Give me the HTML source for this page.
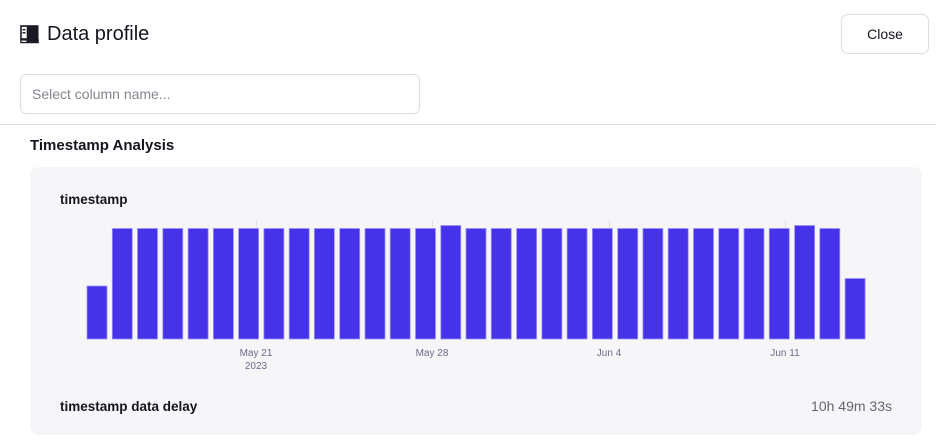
<!DOCTYPE html>
<html><head><meta charset="utf-8"><style>
body{margin:0;width:936px;height:447px;background:#fff;font-family:"Liberation Sans",sans-serif;position:relative;overflow:hidden;color:#15151f}
.abs{position:absolute}
</style></head><body>
<svg class="abs" style="left:20px;top:25px" width="19" height="19" viewBox="0 0 19 19"><rect x="1" y="1" width="6.5" height="13" fill="none" stroke="#1a1a24" stroke-width="1.6"/><rect x="8" y="0.2" width="10.5" height="14.5" fill="#1a1a24"/><rect x="0.2" y="14" width="18.6" height="4.3" rx="0.6" fill="#1a1a24"/><rect x="2.5" y="4" width="3" height="1.4" fill="#1a1a24"/><rect x="2.5" y="7" width="3" height="1.4" fill="#1a1a24"/><rect x="1.5" y="15.6" width="5" height="1.3" fill="#fff"/></svg>
<div class="abs" style="left:47px;top:23px;font-size:20px">Data profile</div>
<div class="abs" style="left:841px;top:14px;width:86px;height:38px;border:1px solid #dcdce4;border-radius:7px;font-size:14px;line-height:38px;text-align:center">Close</div>
<div class="abs" style="left:20px;top:74px;width:398px;height:38px;border:1px solid #dcdce6;border-radius:6px;font-size:14px;line-height:38px;color:#85858f"><span style="padding-left:11px">Select column name...</span></div>
<div class="abs" style="left:0;top:124px;width:936px;height:1px;background:#dedee6"></div>
<div class="abs" style="left:30px;top:137px;font-size:15px;font-weight:bold">Timestamp Analysis</div>
<div class="abs" style="left:30px;top:167px;width:892px;height:268px;background:#f6f6f9;border-radius:9px"></div>
<div class="abs" style="left:60px;top:192px;font-size:13.5px;font-weight:bold">timestamp</div>
<svg class="abs" style="left:0;top:0" width="936" height="447">
<g stroke="#e2e2e8" stroke-width="1"><line x1="256.5" y1="220" x2="256.5" y2="228"/><line x1="432.5" y1="220" x2="432.5" y2="228"/><line x1="609.5" y1="220" x2="609.5" y2="228"/><line x1="785.5" y1="220" x2="785.5" y2="228"/></g>
<g fill="#4632e8" stroke="#9d92f5" stroke-width="0.8">
<rect x="87" y="286" width="20" height="53"/>
<rect x="112.3" y="228.5" width="20" height="110.5"/>
<rect x="137.5" y="228.5" width="20" height="110.5"/>
<rect x="162.8" y="228.5" width="20" height="110.5"/>
<rect x="188.1" y="228.5" width="20" height="110.5"/>
<rect x="213.4" y="228.5" width="20" height="110.5"/>
<rect x="238.6" y="228.5" width="20" height="110.5"/>
<rect x="263.9" y="228.5" width="20" height="110.5"/>
<rect x="289.2" y="228.5" width="20" height="110.5"/>
<rect x="314.4" y="228.5" width="20" height="110.5"/>
<rect x="339.7" y="228.5" width="20" height="110.5"/>
<rect x="365" y="228.5" width="20" height="110.5"/>
<rect x="390.2" y="228.5" width="20" height="110.5"/>
<rect x="415.5" y="228.5" width="20" height="110.5"/>
<rect x="440.8" y="225.5" width="20" height="113.5"/>
<rect x="466" y="228.5" width="20" height="110.5"/>
<rect x="491.3" y="228.5" width="20" height="110.5"/>
<rect x="516.6" y="228.5" width="20" height="110.5"/>
<rect x="541.9" y="228.5" width="20" height="110.5"/>
<rect x="567.1" y="228.5" width="20" height="110.5"/>
<rect x="592.4" y="228.5" width="20" height="110.5"/>
<rect x="617.7" y="228.5" width="20" height="110.5"/>
<rect x="642.9" y="228.5" width="20" height="110.5"/>
<rect x="668.2" y="228.5" width="20" height="110.5"/>
<rect x="693.5" y="228.5" width="20" height="110.5"/>
<rect x="718.7" y="228.5" width="20" height="110.5"/>
<rect x="744" y="228.5" width="20" height="110.5"/>
<rect x="769.3" y="228.5" width="20" height="110.5"/>
<rect x="794.6" y="225.5" width="20" height="113.5"/>
<rect x="819.8" y="228.5" width="20" height="110.5"/>
<rect x="845.1" y="278.5" width="20" height="60.5"/>
</g>
<g font-family="Liberation Sans" font-size="10" fill="#6a6a8a" text-anchor="middle">
<text x="256" y="356">May 21</text><text x="256" y="369">2023</text>
<text x="432" y="356">May 28</text><text x="609" y="356">Jun 4</text><text x="785" y="356">Jun 11</text>
</g>
</svg>
<div class="abs" style="left:60px;top:399px;font-size:13.5px;font-weight:bold">timestamp data delay</div>
<div class="abs" style="right:44px;top:398px;font-size:14px;color:#666670">10h 49m 33s</div>
</body></html>
